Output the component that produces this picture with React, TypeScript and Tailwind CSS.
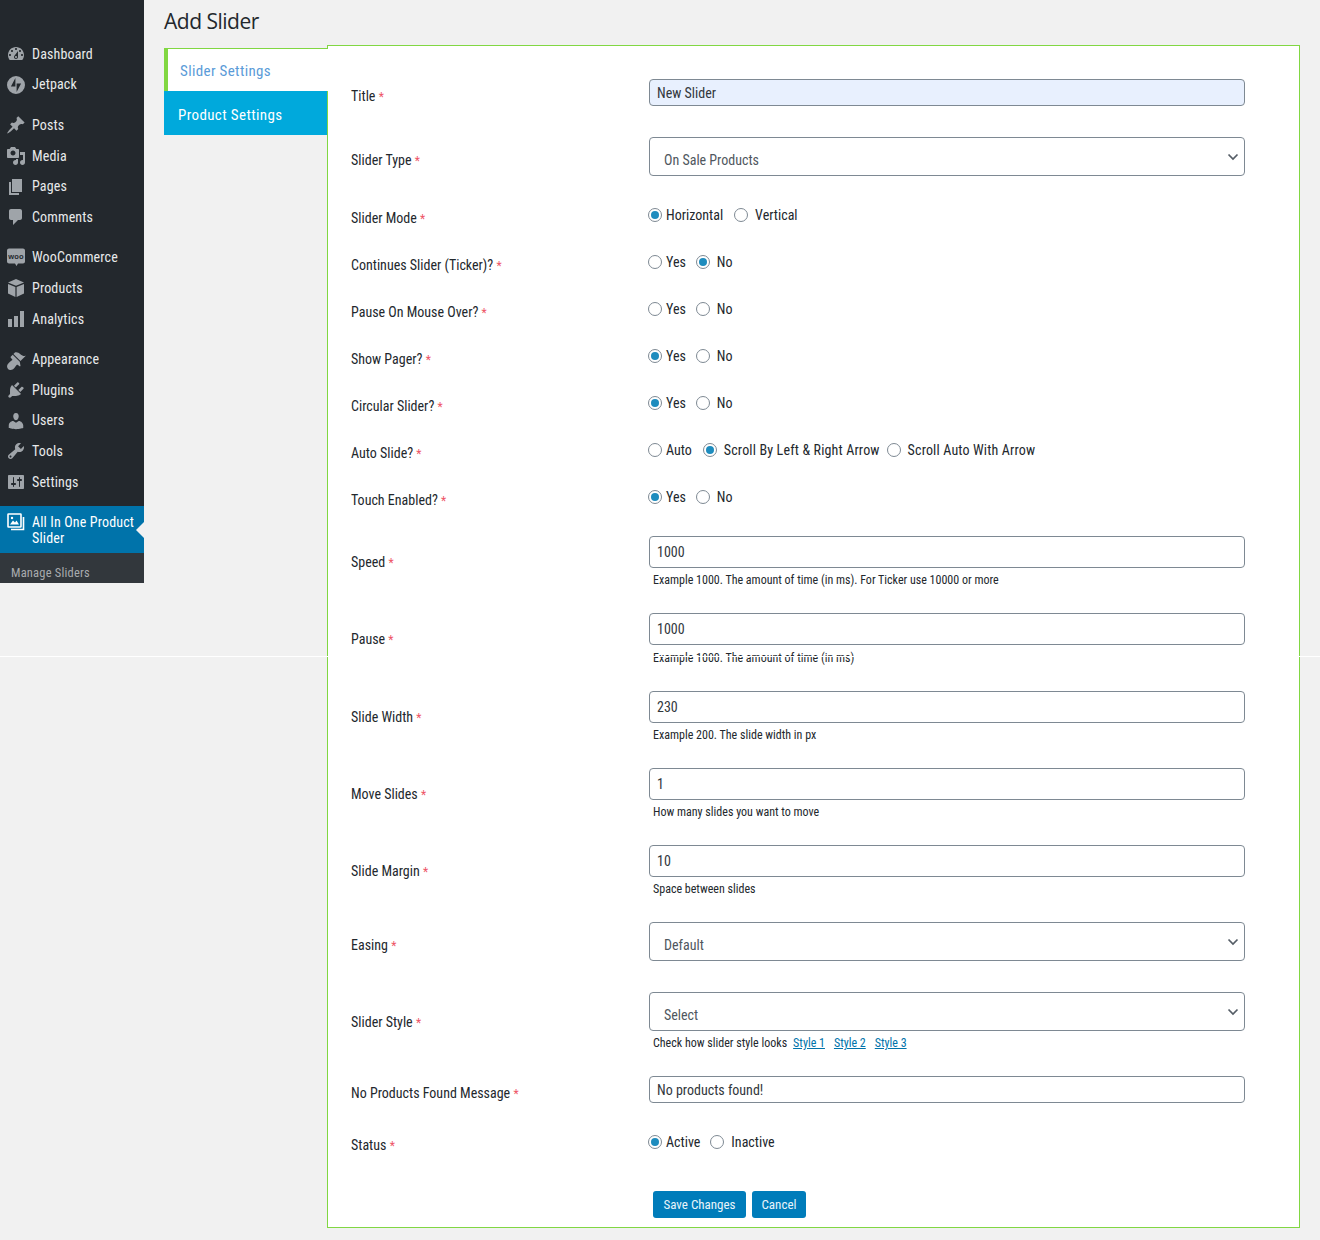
import React from "react";

const P: Record<string, string> = {
  dashboard: "M3.76 16h12.48c1.1-1.37 1.76-3.11 1.76-5 0-4.42-3.58-8-8-8s-8 3.58-8 8c0 1.89.66 3.63 1.76 5zM10 4c.55 0 1 .45 1 1s-.45 1-1 1-1-.45-1-1 .45-1 1-1zM6 6c.55 0 1 .45 1 1s-.45 1-1 1-1-.45-1-1 .45-1 1-1zm8 0c.55 0 1 .45 1 1s-.45 1-1 1-1-.45-1-1 .45-1 1-1zm-5.37 5.55L12 7v6c0 1.1-.9 2-2 2s-2-.9-2-2c0-.57.24-1.08.63-1.45zM4 10c.55 0 1 .45 1 1s-.45 1-1 1-1-.45-1-1 .45-1 1-1zm12 0c.55 0 1 .45 1 1s-.45 1-1 1-1-.45-1-1 .45-1 1-1zm-5 3c0-.55-.45-1-1-1s-1 .45-1 1 .45 1 1 1 1-.45 1-1z",
  jetpack: "M10 1a9 9 0 1 0 0 18 9 9 0 0 0 0-18zM9.4 11.6H4.9L9.4 3zM10.6 8.4V17l4.5-8.6z",
  posts: "M10.44 3.02l1.82-1.82 6.36 6.35-1.83 1.82c-1.05-.68-2.48-.57-3.41.36l-.75.75c-.92.93-1.04 2.35-.35 3.41l-1.83 1.82-2.41-2.41-2.8 2.79c-.42.42-3.38 2.71-3.8 2.29s1.86-3.39 2.28-3.81l2.79-2.79L4.1 9.36l1.83-1.82c1.05.69 2.48.57 3.4-.36l.75-.75c.93-.92 1.05-2.35.36-3.41z",
  media: "M13 11V4c0-.55-.45-1-1-1h-1.67L9 1H5L3.67 3H2c-.55 0-1 .45-1 1v7c0 .55.45 1 1 1h10c.55 0 1-.45 1-1zM7 4.5c1.38 0 2.5 1.12 2.5 2.5S8.38 9.5 7 9.5 4.5 8.38 4.5 7 5.62 4.5 7 4.5zM14 6h5v10.5c0 1.38-1.12 2.5-2.5 2.5S14 17.88 14 16.5s1.12-2.5 2.5-2.5c.17 0 .34.02.5.05V9h-3V6zm-4 8.05V13h2v3.5c0 1.38-1.12 2.5-2.5 2.5S7 17.88 7 16.5 8.12 14 9.5 14c.17 0 .34.02.5.05z",
  pages: "M6 15V2h10v13H6zm-1 1h8v2H3V5h2v11z",
  comments: "M5 2h9c1.1 0 2 .9 2 2v7c0 1.1-.9 2-2 2h-2l-5 5v-5H5c-1.1 0-2-.9-2-2V4c0-1.1.9-2 2-2z",
  products: "M10 1l8 3.4-8 3.4-8-3.4zM2 6l7.4 3.1V19L2 15.6zM18 6v9.6L10.6 19V9.1z",
  analytics: "M18 18V2h-4v16h4zm-6 0V7H8v11h4zm-6 0v-8H2v8h4z",
  appearance: "M14.48 11.06L7.41 3.99l1.5-1.5c.5-.56 2.3-.47 3.51.32 1.21.8 1.43 1.28 2.91 2.1 1.18.64 2.45 1.26 4.45.85zm-.71.71L6.7 4.7 4.93 6.47c-.39.39-.39 1.02 0 1.41l1.06 1.06c.39.39.39 1.03 0 1.42-.6.6-1.43 1.11-2.21 1.69-.35.26-.7.53-1.01.84-1.34 1.34-2.37 2.96-1.21 5.31.45.9 1 1.24 1.24 1.24 2.35 1.16 3.97.13 5.31-1.21.31-.31.58-.66.84-1.01.58-.78 1.09-1.61 1.69-2.21.39-.39 1.03-.39 1.42 0l1.06 1.06c.39.39 1.02.39 1.41 0z",
  plugins: "M13.11 4.36L9.87 7.6 8 5.73l3.24-3.24c.35-.34 1.05-.2 1.56.32.52.51.66 1.21.31 1.55zm-8 1.77l.91-1.12 9.01 9.01-1.19.84c-.71.71-2.63 1.16-3.82 1.16H6.14L4.9 17.26c-.59.59-1.54.59-2.12 0-.59-.58-.59-1.53 0-2.12l1.24-1.24v-3.88c0-1.13.4-3.19 1.09-3.89zm7.26 3.97l3.24-3.24c.34-.35 1.04-.21 1.55.31.52.51.66 1.21.31 1.55l-3.24 3.25z",
  users: "M10 9.25c-2.27 0-2.73-3.44-2.73-3.44C7 4.02 7.82 2 9.97 2c2.16 0 2.98 2.02 2.71 3.81 0 0-.41 3.44-2.68 3.44zm0 2.57L12.72 10c2.39 0 4.52 2.33 4.52 4.53v2.49s-3.65 1.13-7.24 1.13c-3.65 0-7.24-1.13-7.24-1.13v-2.49c0-2.25 1.94-4.48 4.47-4.48z",
  tools: "M16.68 9.77c-1.34 1.34-3.3 1.67-4.95.99l-5.41 6.52c-.99.99-2.59.99-3.58 0s-.99-2.59 0-3.57l6.52-5.42c-.68-1.65-.35-3.61.99-4.95 1.28-1.28 3.12-1.62 4.72-1.06l-2.89 2.89 2.82 2.82 2.86-2.87c.53 1.58.18 3.39-1.08 4.65zM3.81 16.21c.4.39 1.04.39 1.43 0 .4-.4.4-1.04 0-1.43-.39-.4-1.03-.4-1.43 0-.39.39-.39 1.03 0 1.43z",
  settings: "M18 16V4c0-.55-.45-1-1-1H3c-.55 0-1 .45-1 1v12c0 .55.45 1 1 1h14c.55 0 1-.45 1-1zM8 11h1c.55 0 1 .45 1 1s-.45 1-1 1H8v1.5c0 .28-.22.5-.5.5s-.5-.22-.5-.5V13H6c-.55 0-1-.45-1-1s.45-1 1-1h1V5.5c0-.28.22-.5.5-.5s.5.22.5.5V11zm5-2h-1c-.55 0-1-.45-1-1s.45-1 1-1h1V5.5c0-.28.22-.5.5-.5s.5.22.5.5V7h1c.55 0 1 .45 1 1s-.45 1-1 1h-1v5.5c0 .28-.22.5-.5.5s-.5-.22-.5-.5V9z",
};

function Icon({ name }: { name: string }) {
  return (
    <svg viewBox="0 0 20 20" className="w-[20px] h-[20px] shrink-0 text-[#9fa4a9]" fill="currentColor" fillRule="evenodd">
      {name === "woo" ? (
        <>
          <path d="M3 .5h14c1 0 2 .8 2 2v11c0 1.200-1 2-2 2h-5l-1.500 2.500L9 15.500H3c-1 0-2-.8-2-2v-11c0-1.200 1-2 2-2z" />
          <text x="10" y="10.500" textAnchor="middle" fontSize="7.500" fontWeight="700" fill="#23282d" fontFamily="'Liberation Sans', sans-serif">woo</text>
        </>
      ) : (
        <path d={P[name]} />
      )}
    </svg>
  );
}

function SideItem({ icon, label }: { icon: string; label: string }) {
  return (
    <a className="flex h-[30.6px] items-center pl-[6px] text-[#e8eaeb]">
      <Icon name={icon} />
      <span className="ml-[6px]">{label}</span>
    </a>
  );
}

function Sidebar() {
  return (
    <aside className="w-[144px] shrink-0 self-start h-[583px] bg-[#23282d] pt-[39px] flex flex-col text-[14px] tracking-[0.15px]">
      <SideItem icon="dashboard" label="Dashboard" />
      <SideItem icon="jetpack" label="Jetpack" />
      <div className="h-[10px]" />
      <SideItem icon="posts" label="Posts" />
      <SideItem icon="media" label="Media" />
      <SideItem icon="pages" label="Pages" />
      <SideItem icon="comments" label="Comments" />
      <div className="h-[10px]" />
      <SideItem icon="woo" label="WooCommerce" />
      <SideItem icon="products" label="Products" />
      <SideItem icon="analytics" label="Analytics" />
      <div className="h-[10px]" />
      <SideItem icon="appearance" label="Appearance" />
      <SideItem icon="plugins" label="Plugins" />
      <SideItem icon="users" label="Users" />
      <SideItem icon="tools" label="Tools" />
      <SideItem icon="settings" label="Settings" />
      <div className="relative mt-[9px] h-[47px] bg-[#0073aa] flex pl-[7px] pt-[8px] text-white leading-[16px]">
        <svg viewBox="0 0 18 18" className="w-[18px] h-[18px] shrink-0 -mt-[1px]" fill="none" stroke="#ffffff" strokeWidth="1.600">
          <rect x="1" y="1" width="13" height="13" rx="0.500" />
          <path d="M16.500 4v12.500H4" />
          <path d="M3 11.500l3-4 2 2 1.500-2 2.500 4z" fill="#ffffff" stroke="none" />
          <circle cx="5" cy="5" r="1.200" fill="#ffffff" stroke="none" />
        </svg>
        <span className="ml-[7px] w-[108px]">All In One Product Slider</span>
        <span className="absolute right-0 top-[16px] border-y-[8px] border-r-[8px] border-y-transparent border-r-[#f1f1f1]" />
      </div>
      <div className="flex-1 bg-[#32373c] pl-[11px] pt-[12px] text-[12.500px] leading-[16px] tracking-[0.2px] text-[#a8abae]">Manage Sliders</div>
    </aside>
  );
}

function Req({ children }: { children: React.ReactNode }) {
  return (
    <>
      {children} <span className="text-[#ee5566] text-[12px]">*</span>
    </>
  );
}

function Field({ value, h, bg }: { value: string; h: string; bg?: string }) {
  return (
    <input
      readOnly
      value={value}
      className={`block w-[596px] ${h} ${bg ?? "bg-white"} rounded-[4px] border border-[#7e8993] px-[7px] text-[14px] text-[#32373c] outline-none`}
    />
  );
}

function Chevron() {
  return (
    <svg viewBox="0 0 12 12" className="absolute right-[6px] top-[14px] w-[12px] h-[12px]" fill="none" stroke="#555d66" strokeWidth="1.700">
      <path d="M1.500 3.500 6 8l4.500-4.500" />
    </svg>
  );
}

function Select({ value }: { value: string }) {
  return (
    <div className="relative w-[596px]">
      <select
        value={value}
        onChange={() => {}}
        className="block appearance-none w-full h-[39px] bg-white rounded-[4px] border border-[#7e8993] pl-[14px] pt-[8px] text-[14px] text-[#50575e] outline-none"
      >
        <option>{value}</option>
      </select>
      <Chevron />
    </div>
  );
}

function Radios({ items, on }: { items: string[]; on: number }) {
  return (
    <div className="flex h-[20px] items-center -ml-[1px] leading-[20px]">
      {items.map((t, i) => (
        <label key={t} className={`flex items-center ${t === "Yes" || t === "Active" ? "mr-[10px]" : "mr-[11px]"}`}>
          <span className={`w-[14px] h-[14px] rounded-full border border-[#7e8993] bg-white flex items-center justify-center shrink-0 ${i === 0 ? "mr-[4px]" : "mr-[7px]"}`}>
            {on === i && <span className="w-[8px] h-[8px] rounded-full bg-[#1e8cbe]" />}
          </span>
          <span className={t.startsWith("Scroll") ? "tracking-[0.16px] -mr-[4px]" : ""}>{t}</span>
        </label>
      ))}
    </div>
  );
}

function Help({ children, mt }: { children: React.ReactNode; mt?: string }) {
  return <p className={`${mt ?? "mt-[4px]"} ml-[4px] text-[12px] leading-[16px] text-[#23282d]`}>{children}</p>;
}

function Row({ label, h, pt, children }: { label: string; h: string; pt: string; children: React.ReactNode }) {
  return (
    <div className={`flex ${h}`}>
      <div className={`w-[298px] shrink-0 leading-[20px] ${pt}`}>
        <Req>{label}</Req>
      </div>
      <div>{children}</div>
    </div>
  );
}

function Btn({ children, w }: { children: React.ReactNode; w: string }) {
  return (
    <button className={`h-[27px] ${w} rounded-[3px] bg-[#007cba] text-[13px] pt-[1px] text-[#e8f4fa]`}>{children}</button>
  );
}

export default function App() {
  return (
    <div className="relative flex min-h-[1240px] bg-[#f1f1f1] text-[14px] text-[#23282d] [font-family:'Roboto',sans-serif] [font-stretch:87.5%] overflow-hidden">
      <Sidebar />
      <main className="flex-1 pl-[20px] pr-[20px]">
        <h1 className="h-[45px] pt-[6px] text-[21px] leading-[30px] text-[#23282d] [font-family:'Open_Sans',sans-serif] [font-stretch:100%] tracking-[-0.5px]">Add Slider</h1>
        <div className="flex">
          <nav className="w-[163px] shrink-0 pt-[3px] relative z-10">
            <a className="flex h-[43px] w-[164px] items-center bg-white border-l-[4px] border-t border-[#81d742] pl-[12px] pt-[2px] text-[15px] tracking-[0.35px] text-[#5a9bd8]">Slider Settings</a>
            <a className="flex h-[44px] items-center bg-[#00a9dc] pl-[14px] pt-[4px] text-[15px] tracking-[0.38px] text-white">Product Settings</a>
          </nav>
          <section className="w-[973px] h-[1183px] bg-white border border-[#81d742] pl-[23px] pt-[33px]">
            <Row label="Title" h="h-[58px]" pt="pt-[7px]"><Field value="New Slider" h="h-[27px]" bg="bg-[#e8f0fe]" /></Row>
            <Row label="Slider Type" h="h-[68px]" pt="pt-[13px]"><Select value="On Sale Products" /></Row>
            <Row label="Slider Mode" h="h-[47px]" pt="pt-[3px]"><Radios items={["Horizontal", "Vertical"]} on={0} /></Row>
            <Row label="Continues Slider (Ticker)?" h="h-[47px]" pt="pt-[3px]"><Radios items={["Yes", "No"]} on={1} /></Row>
            <Row label="Pause On Mouse Over?" h="h-[47px]" pt="pt-[3px]"><Radios items={["Yes", "No"]} on={-1} /></Row>
            <Row label="Show Pager?" h="h-[47px]" pt="pt-[3px]"><Radios items={["Yes", "No"]} on={0} /></Row>
            <Row label="Circular Slider?" h="h-[47px]" pt="pt-[3px]"><Radios items={["Yes", "No"]} on={0} /></Row>
            <Row label="Auto Slide?" h="h-[47px]" pt="pt-[3px]"><Radios items={["Auto", "Scroll By Left & Right Arrow", "Scroll Auto With Arrow"]} on={1} /></Row>
            <Row label="Touch Enabled?" h="h-[49px]" pt="pt-[3px]"><Radios items={["Yes", "No"]} on={0} /></Row>
            <Row label="Speed" h="h-[77px]" pt="pt-[16px]">
              <Field value="1000" h="h-[32px]" />
              <Help>Example 1000. The amount of time (in ms). For Ticker use 10000 or more</Help>
            </Row>
            <Row label="Pause" h="h-[78px]" pt="pt-[16px]">
              <Field value="1000" h="h-[32px]" />
              <Help mt="mt-[5px]">Example 1000. The amount of time (in ms)</Help>
            </Row>
            <Row label="Slide Width" h="h-[77px]" pt="pt-[16px]">
              <Field value="230" h="h-[32px]" />
              <Help>Example 200. The slide width in px</Help>
            </Row>
            <Row label="Move Slides" h="h-[77px]" pt="pt-[16px]">
              <Field value="1" h="h-[32px]" />
              <Help>How many slides you want to move</Help>
            </Row>
            <Row label="Slide Margin" h="h-[77px]" pt="pt-[16px]">
              <Field value="10" h="h-[32px]" />
              <Help>Space between slides</Help>
            </Row>
            <Row label="Easing" h="h-[70px]" pt="pt-[13px]"><Select value="Default" /></Row>
            <Row label="Slider Style" h="h-[84px]" pt="pt-[20px]">
              <Select value="Select" />
              <Help>
                Check how slider style looks
                <a className="ml-[6px] underline text-[#0073aa]">Style 1</a>
                <a className="ml-[9px] underline text-[#0073aa]">Style 2</a>
                <a className="ml-[9px] underline text-[#0073aa]">Style 3</a>
              </Help>
            </Row>
            <Row label="No Products Found Message" h="h-[56px]" pt="pt-[7px]"><Field value="No products found!" h="h-[27px]" /></Row>
            <Row label="Status" h="h-[59px]" pt="pt-[3px]"><Radios items={["Active", "Inactive"]} on={0} /></Row>
            <div className="flex gap-[6px] pl-[302px]">
              <Btn w="w-[93px]">Save Changes</Btn>
              <Btn w="w-[54px]">Cancel</Btn>
            </div>
          </section>
        </div>
      </main>
      <div className="absolute left-0 right-0 top-[656px] h-px bg-white" />
    </div>
  );
}
